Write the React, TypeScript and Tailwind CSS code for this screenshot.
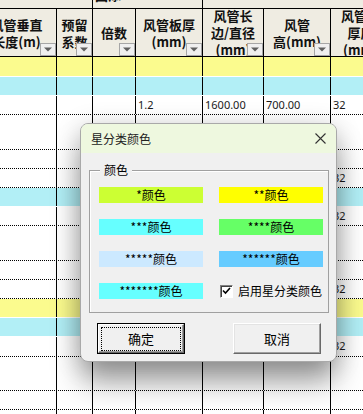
import React from "react";

const COLS = ["w-[80px]", "w-[36px]", "w-[43px]", "w-[67px]", "w-[61px]", "w-[67px]", "w-[60px]"];

type Row = { h: string; kind: "yellow" | "cyan" | "data" | "blank" };

const ROWS: Row[] = [
  { h: "h-[20px]", kind: "yellow" },
  { h: "h-[19px]", kind: "cyan" },
  { h: "h-[19px]", kind: "data" },
  { h: "h-[35px]", kind: "blank" },
  { h: "h-[19px]", kind: "blank" },
  { h: "h-[19px]", kind: "data" },
  { h: "h-[19px]", kind: "cyan" },
  { h: "h-[19px]", kind: "data" },
  { h: "h-[35px]", kind: "blank" },
  { h: "h-[19px]", kind: "blank" },
  { h: "h-[19px]", kind: "data" },
  { h: "h-[19px]", kind: "yellow" },
  { h: "h-[19px]", kind: "cyan" },
  { h: "h-[20px]", kind: "data" },
  { h: "h-[34px]", kind: "blank" },
  { h: "h-[19px]", kind: "blank" },
  { h: "h-[19px]", kind: "blank" },
];

function FilterButton() {
  return (
    <span className="absolute right-0 bottom-0 w-[16px] h-[13px] border border-[#a6a6a6] bg-[#efefef] flex items-center justify-center">
      <svg width="8" height="5" viewBox="0 0 8 5">
        <path d="M0 0.5 L8 0.5 L4 4.5 Z" fill="#606060" />
      </svg>
    </span>
  );
}

const HEADERS: { lines: string[]; filter: boolean }[] = [
  { lines: ["风管垂直", "长度(m)"], filter: true },
  { lines: ["预留", "系数"], filter: true },
  { lines: ["倍数"], filter: true },
  { lines: ["风管板厚", "(mm)"], filter: true },
  { lines: ["风管长", "边/直径", "(mm)"], filter: true },
  { lines: ["风管", "高(mm)"], filter: true },
  { lines: ["风管保", "厚度", "(mm)"], filter: false },
];

function Sheet() {
  return (
    <div className="ml-[-23px] w-[420px] font-['Noto_Sans_CJK_SC',sans-serif] text-[#111]">
      {/* title strip above the header */}
      <div className="flex h-[9px] border-b border-black bg-[#efece2] overflow-hidden">
        <div className="w-[116px] shrink-0 border-r border-black" />
        <div className="w-[110px] shrink-0 border-r border-black overflow-hidden">
          <div className="mt-[-13px] pl-[2px] text-[13px] leading-[16px] font-bold">回添</div>
        </div>
        <div className="flex-1" />
      </div>

      {/* header */}
      <div className="flex h-[48px] border-b border-black bg-[#efece2]">
        {HEADERS.map((c, i) => (
          <div
            key={i}
            className={`${COLS[i]} shrink-0 relative border-r border-black flex flex-col items-center justify-center overflow-hidden text-[13px] leading-[17px] font-bold text-center`}
          >
            {c.lines.map((l, j) => (
              <span key={j} className="whitespace-nowrap">
                {l}
              </span>
            ))}
            {c.filter && <FilterButton />}
          </div>
        ))}
      </div>

      {/* body */}
      {ROWS.map((r, i) => {
        const fill =
          r.kind === "yellow"
            ? "bg-[#fbfb8e] border-white border-solid"
            : r.kind === "cyan"
            ? "bg-[#b2eff6] border-white border-solid"
            : "bg-white border-black border-dotted";
        const vals = r.kind === "data" ? ["", "", "", "1.2", "1600.00", "700.00", "32"] : ["", "", "", "", "", "", ""];
        return (
          <div key={i} className={`flex ${r.h} border-b ${fill}`}>
            {COLS.map((w, j) => (
              <div
                key={j}
                className={`${w} shrink-0 border-r border-solid border-black flex items-center pl-[2px] font-['Noto_Sans',sans-serif] text-[11px] text-[#1a1a1a]`}
              >
                {vals[j]}
              </div>
            ))}
          </div>
        );
      })}
    </div>
  );
}

function ColorSwatch({ label, color }: { label: string; color: string }) {
  return (
    <div className={`h-[16px] ${color} flex items-center justify-center text-[12px] leading-[16px] text-black`}>
      {label}
    </div>
  );
}

function Dialog() {
  return (
    <div className="absolute left-[80px] top-[123px] w-[257px] h-[239px] rounded-[8px] border border-[#a9a9a9] bg-[#f0f0f0] overflow-hidden shadow-[0_22px_30px_-2px_rgba(0,0,0,0.36),0_4px_26px_rgba(0,0,0,0.2)] font-['Noto_Sans_CJK_SC',sans-serif] text-black">
      {/* title bar */}
      <div className="h-[29px] bg-[#eef8df] flex items-center justify-between pl-[10px] pr-[10px]">
        <span className="text-[12px] leading-[16px] text-[#222]">星分类颜色</span>
        <svg width="11" height="11" viewBox="0 0 11 11">
          <path d="M0.5 0.5 L10.5 10.5 M10.5 0.5 L0.5 10.5" stroke="#333" strokeWidth="1.1" />
        </svg>
      </div>

      {/* group box */}
      <div className="relative mt-[17px] ml-[8px] w-[240px] h-[143px] border border-[#a0a0a0] shadow-[inset_1px_1px_0_#ffffff] pt-[16px] pl-[9px] pr-[4px]">
        <span className="absolute left-[10px] top-[-9px] px-[4px] bg-[#f0f0f0] text-[12px] leading-[16px]">颜色</span>
        <div className="grid grid-cols-[104px_104px] gap-x-[16px] gap-y-[16px]">
          <ColorSwatch label="*颜色" color="bg-[#ccff33]" />
          <ColorSwatch label="**颜色" color="bg-[#ffff00]" />
          <ColorSwatch label="***颜色" color="bg-[#66ffff]" />
          <ColorSwatch label="****颜色" color="bg-[#66ff66]" />
          <ColorSwatch label="*****颜色" color="bg-[#cce9ff]" />
          <ColorSwatch label="******颜色" color="bg-[#66ccff]" />
          <ColorSwatch label="*******颜色" color="bg-[#66ffff]" />
          <div className="h-[16px] flex items-center gap-[5px] pl-[1px]">
            <span className="w-[13px] h-[13px] shrink-0 bg-white border border-t-[#808080] border-l-[#808080] border-r-white border-b-white shadow-[inset_1px_1px_0_#404040] flex items-center justify-center">
              <svg width="9" height="8" viewBox="0 0 9 8">
                <path d="M1 3.5 L3.5 6 L8 1" stroke="#000" strokeWidth="1.6" fill="none" />
              </svg>
            </span>
            <span className="text-[12px] leading-[16px] whitespace-nowrap">启用星分类颜色</span>
          </div>
        </div>
      </div>

      {/* buttons */}
      <div className="flex mt-[10px] pl-[16px] gap-[48px]">
        <div className="w-[88px] h-[31px] border border-black bg-[#f0f0f0]">
          <div className="h-full border border-t-white border-l-white border-r-[#696969] border-b-[#696969] shadow-[inset_-1px_-1px_0_#a0a0a0] p-[2px] pb-[1px]">
            <div className="h-full border border-dotted border-black flex items-center justify-center text-[13px]">确定</div>
          </div>
        </div>
        <div className="w-[88px] h-[31px] border border-t-white border-l-white border-r-[#696969] border-b-[#696969] shadow-[inset_-1px_-1px_0_#a0a0a0,inset_1px_1px_0_#e3e3e3] bg-[#f0f0f0] flex items-center justify-center text-[13px]">
          取消
        </div>
      </div>
    </div>
  );
}

export default function App() {
  return (
    <div className="relative w-[363px] h-[414px] overflow-hidden bg-white">
      <Sheet />
      <Dialog />
    </div>
  );
}
